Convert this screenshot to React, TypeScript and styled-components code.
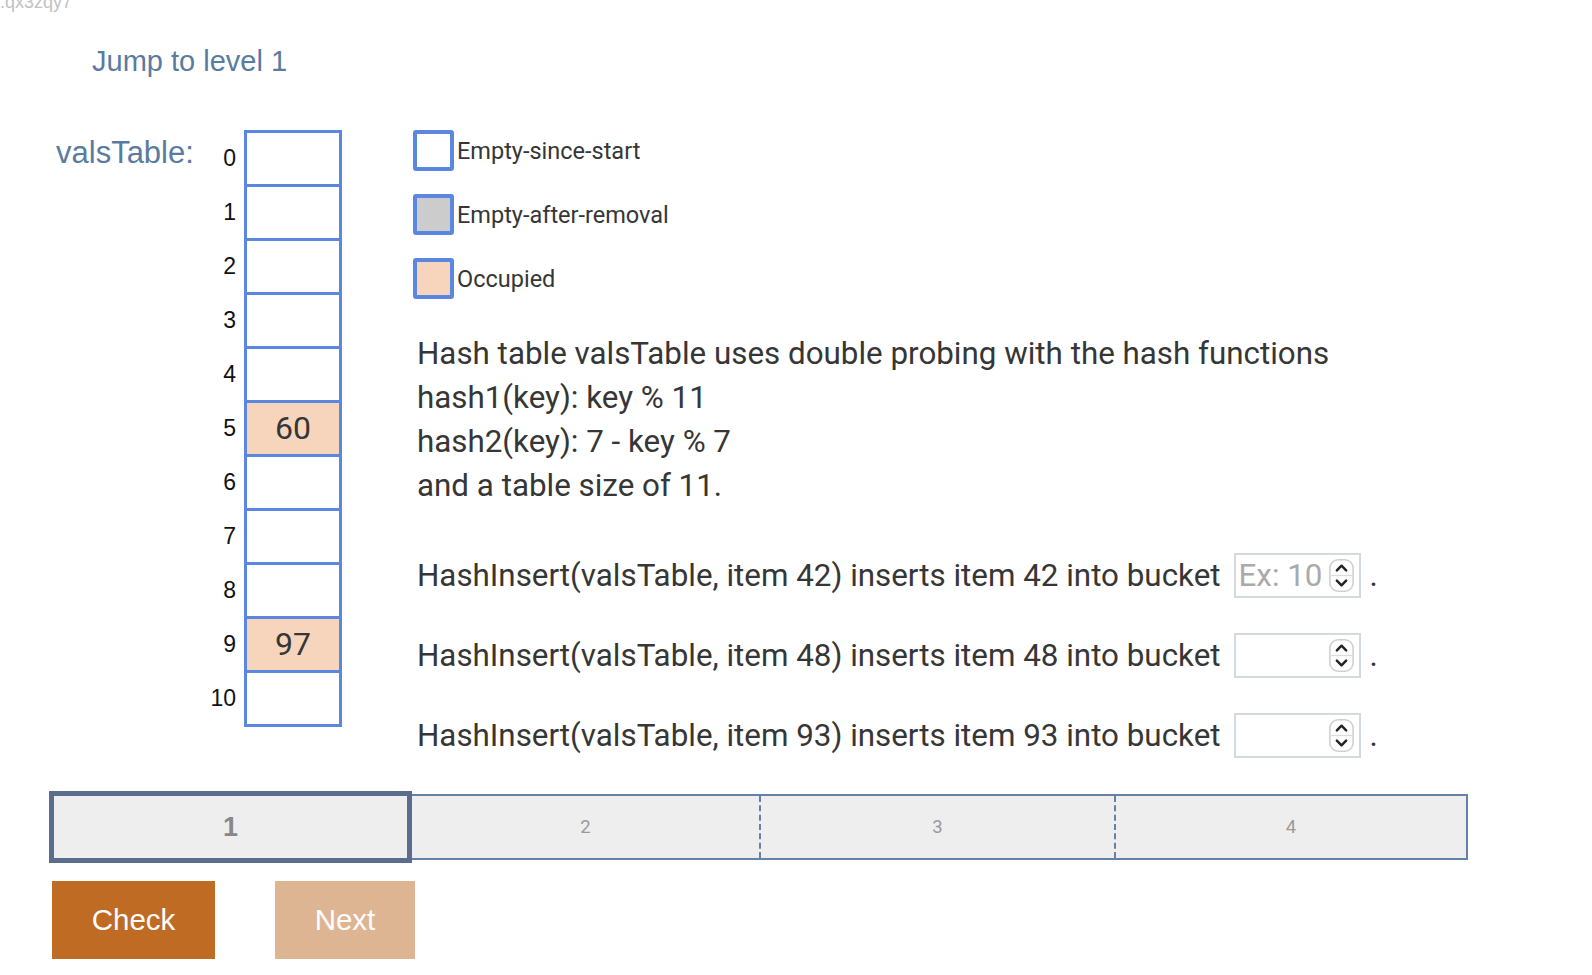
import React from 'react'
import styled, { createGlobalStyle } from 'styled-components'

const GlobalStyle = createGlobalStyle`
  body {
    margin: 0;
    background: #fff;
    font-family: Roboto, "Liberation Sans", sans-serif;
    color: #363636;
  }
`

const Page = styled.div`
  padding-bottom: 10px;
`

const Slug = styled.div`
  font-family: "Liberation Sans", Arial, sans-serif;
  font-size: 18px;
  line-height: 18px;
  color: #c2c2c2;
  margin-top: -7px;
`

const JumpLink = styled.div`
  font-family: "Liberation Sans", Arial, sans-serif;
  font-size: 29px;
  line-height: 32px;
  color: #5a7ba1;
  margin: 34px 0 0 92px;
`

const Main = styled.div`
  display: flex;
  align-items: flex-start;
  margin-top: 53px;
  padding-left: 56px;
`

const TableLabel = styled.div`
  font-family: "Liberation Sans", Arial, sans-serif;
  font-size: 31px;
  line-height: 46px;
  color: #5a7ba1;
  width: 131px;
`

const IndexCol = styled.div`
  width: 49px;
  margin-right: 8px;
  padding-top: 3px;
  display: flex;
  flex-direction: column;
  gap: 3px;
`

const IndexLabel = styled.div`
  height: 51px;
  line-height: 51px;
  text-align: right;
  font-family: "Liberation Sans", Arial, sans-serif;
  font-size: 23px;
  color: #111;
`

const Table = styled.div`
  width: 92px;
  border: 3px solid #5b87e0;
  display: flex;
  flex-direction: column;
`

const Cell = styled.div<{ $occupied?: boolean }>`
  height: 51px;
  line-height: 51px;
  text-align: center;
  font-size: 32px;
  color: #363636;
  background: ${p => (p.$occupied ? '#f6d5bc' : '#fff')};
  & + & {
    border-top: 3px solid #5b87e0;
  }
`

const RightCol = styled.div`
  margin-left: 71px;
  display: flex;
  flex-direction: column;
`

const Legend = styled.div`
  display: flex;
  flex-direction: column;
  gap: 23px;
`

const LegendItem = styled.div`
  display: flex;
  align-items: center;
  gap: 3px;
  font-size: 23.5px;
  color: #363636;
`

const Swatch = styled.span<{ $fill: string }>`
  width: 41px;
  height: 41px;
  box-sizing: border-box;
  border: 4px solid #5b87e0;
  border-radius: 3px;
  background: ${p => p.$fill};
`

const Description = styled.div`
  margin-top: 33px;
  margin-left: 4px;
  font-size: 31.35px;
  line-height: 44px;
  color: #363636;
`

const Questions = styled.div`
  margin-top: 45px;
  margin-left: 4px;
  display: flex;
  flex-direction: column;
  gap: 35px;
`

const QuestionRow = styled.div`
  display: flex;
  align-items: center;
  height: 45px;
  font-size: 31.35px;
  color: #363636;
  white-space: nowrap;
`

const AnswerBox = styled.div`
  position: relative;
  width: 127px;
  height: 45px;
  box-sizing: border-box;
  border: 2px solid #d3dadf;
  margin-left: 13px;
`

const AnswerInput = styled.input`
  width: 92px;
  height: 41px;
  border: none;
  outline: none;
  padding: 0 0 0 3px;
  font-family: Roboto, sans-serif;
  font-size: 31.35px;
  color: #363636;
  background: transparent;
  &::placeholder {
    color: #aaa;
  }
`

const SpinnerIcon = styled.svg`
  position: absolute;
  right: 5px;
  top: 4px;
`

const Period = styled.span`
  margin-left: 9px;
`

const Progress = styled.div`
  display: grid;
  grid-template-columns: 363px 347px 355px 1fr;
  width: 1417px;
  height: 62px;
  margin: 36px 0 0 49px;
  border-top: 2px solid #6581a8;
  border-bottom: 2px solid #6581a8;
  border-right: 2px solid #6581a8;
  background: #eee;
`

const Segment = styled.div<{ $active?: boolean; $dashed?: boolean }>`
  display: flex;
  align-items: center;
  justify-content: center;
  background: #eee;
  ${p =>
    p.$active
      ? `
    margin: -5px 0;
    border: 5px solid #5a6d8d;
    font-family: "Liberation Sans", Arial, sans-serif;
    font-weight: bold;
    font-size: 27px;
    color: #888;
  `
      : `
    font-size: 18.5px;
    color: #9a9a9a;
  `}
  ${p => (p.$dashed ? 'border-left: 2px dashed #6581a8;' : '')}
`

const ButtonRow = styled.div`
  display: flex;
  gap: 60px;
  margin: 21px 0 0 52px;
`

const ActionButton = styled.button<{ $bg: string; $w: number }>`
  width: ${p => p.$w}px;
  height: 78px;
  border: none;
  padding: 0;
  background: ${p => p.$bg};
  color: #fff;
  font-family: "Liberation Sans", Arial, sans-serif;
  font-size: 29.5px;
  cursor: pointer;
`

const Spinner = () => (
  <SpinnerIcon width="25" height="33" viewBox="0 0 24 32">
    <rect x="0.75" y="0.75" width="22.5" height="30.5" rx="8" fill="#fff" stroke="#cfcfcf" strokeWidth="1.5" />
    <line x1="1" y1="16" x2="23" y2="16" stroke="#dcdcdc" strokeWidth="1.2" />
    <polyline points="7.5,11 12,6.5 16.5,11" fill="none" stroke="#222" strokeWidth="2.4" strokeLinecap="round" strokeLinejoin="round" />
    <polyline points="7.5,21 12,25.5 16.5,21" fill="none" stroke="#222" strokeWidth="2.4" strokeLinecap="round" strokeLinejoin="round" />
  </SpinnerIcon>
)

const values: Record<number, string> = { 5: '60', 9: '97' }
const items = [42, 48, 93]

export default function App() {
  const rows = Array.from({ length: 11 }, (_, i) => i)
  return (
    <>
      <GlobalStyle />
      <Page>
        <Slug>.qx3zqy7</Slug>
        <JumpLink>Jump to level 1</JumpLink>
        <Main>
          <TableLabel>valsTable:</TableLabel>
          <IndexCol>
            {rows.map(i => (
              <IndexLabel key={i}>{i}</IndexLabel>
            ))}
          </IndexCol>
          <Table>
            {rows.map(i => (
              <Cell key={i} $occupied={!!values[i]}>
                {values[i] ?? ''}
              </Cell>
            ))}
          </Table>
          <RightCol>
            <Legend>
              <LegendItem>
                <Swatch $fill="#fff" />
                Empty-since-start
              </LegendItem>
              <LegendItem>
                <Swatch $fill="#cccccc" />
                Empty-after-removal
              </LegendItem>
              <LegendItem>
                <Swatch $fill="#f6d5bc" />
                Occupied
              </LegendItem>
            </Legend>
            <Description>
              Hash table valsTable uses double probing with the hash functions
              <br />
              hash1(key): key % 11
              <br />
              hash2(key): 7 - key % 7
              <br />
              and a table size of 11.
            </Description>
            <Questions>
              {items.map((item, idx) => (
                <QuestionRow key={item}>
                  HashInsert(valsTable, item {item}) inserts item {item} into bucket
                  <AnswerBox>
                    <AnswerInput placeholder={idx === 0 ? 'Ex: 10' : ''} />
                    <Spinner />
                  </AnswerBox>
                  <Period>.</Period>
                </QuestionRow>
              ))}
            </Questions>
          </RightCol>
        </Main>
        <Progress>
          <Segment $active>1</Segment>
          <Segment>2</Segment>
          <Segment $dashed>3</Segment>
          <Segment $dashed>4</Segment>
        </Progress>
        <ButtonRow>
          <ActionButton $bg="#bf6b24" $w={163}>Check</ActionButton>
          <ActionButton $bg="#deb593" $w={140}>Next</ActionButton>
        </ButtonRow>
      </Page>
    </>
  )
}
